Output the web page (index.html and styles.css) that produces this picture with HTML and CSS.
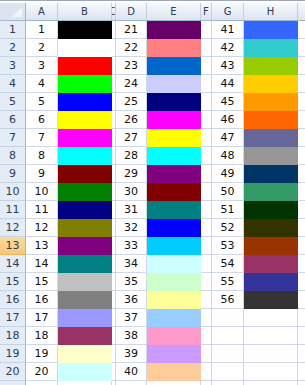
FILE: index.html
```html
<!DOCTYPE html>
<html>
<head>
<meta charset="utf-8">
<link rel="stylesheet" href="styles.css">
</head>
<body>
<div class="sheet">
  <div class="grid">
    <div class="ch corner"><span class="tri"></span></div>
    <div class="ch">A</div><div class="ch">B</div><div class="ch cut">C</div><div class="ch">D</div><div class="ch">E</div><div class="ch">F</div><div class="ch">G</div><div class="ch">H</div><div class="ch"></div>

    <div class="rh">1</div><div class="c">1</div><div class="c fill" style="--c:#000000"></div><div class="c"></div><div class="c">21</div><div class="c fill" style="--c:#660066"></div><div class="c"></div><div class="c">41</div><div class="c fill" style="--c:#3366FF"></div><div class="c"></div>
    <div class="rh">2</div><div class="c">2</div><div class="c fill" style="--c:#FFFFFF"></div><div class="c"></div><div class="c">22</div><div class="c fill" style="--c:#FF8080"></div><div class="c"></div><div class="c">42</div><div class="c fill" style="--c:#33CCCC"></div><div class="c"></div>
    <div class="rh">3</div><div class="c">3</div><div class="c fill" style="--c:#FF0000"></div><div class="c"></div><div class="c">23</div><div class="c fill" style="--c:#0066CC"></div><div class="c"></div><div class="c">43</div><div class="c fill" style="--c:#99CC00"></div><div class="c"></div>
    <div class="rh">4</div><div class="c">4</div><div class="c fill" style="--c:#00FF00"></div><div class="c"></div><div class="c">24</div><div class="c fill" style="--c:#CCCCFF"></div><div class="c"></div><div class="c">44</div><div class="c fill" style="--c:#FFCC00"></div><div class="c"></div>
    <div class="rh">5</div><div class="c">5</div><div class="c fill" style="--c:#0000FF"></div><div class="c"></div><div class="c">25</div><div class="c fill" style="--c:#000080"></div><div class="c"></div><div class="c">45</div><div class="c fill" style="--c:#FF9900"></div><div class="c"></div>
    <div class="rh">6</div><div class="c">6</div><div class="c fill" style="--c:#FFFF00"></div><div class="c"></div><div class="c">26</div><div class="c fill" style="--c:#FF00FF"></div><div class="c"></div><div class="c">46</div><div class="c fill" style="--c:#FF6600"></div><div class="c"></div>
    <div class="rh">7</div><div class="c">7</div><div class="c fill" style="--c:#FF00FF"></div><div class="c"></div><div class="c">27</div><div class="c fill" style="--c:#FFFF00"></div><div class="c"></div><div class="c">47</div><div class="c fill" style="--c:#666699"></div><div class="c"></div>
    <div class="rh">8</div><div class="c">8</div><div class="c fill" style="--c:#00FFFF"></div><div class="c"></div><div class="c">28</div><div class="c fill" style="--c:#00FFFF"></div><div class="c"></div><div class="c">48</div><div class="c fill" style="--c:#969696"></div><div class="c"></div>
    <div class="rh">9</div><div class="c">9</div><div class="c fill" style="--c:#800000"></div><div class="c"></div><div class="c">29</div><div class="c fill" style="--c:#800080"></div><div class="c"></div><div class="c">49</div><div class="c fill" style="--c:#003366"></div><div class="c"></div>
    <div class="rh">10</div><div class="c">10</div><div class="c fill" style="--c:#008000"></div><div class="c"></div><div class="c">30</div><div class="c fill" style="--c:#800000"></div><div class="c"></div><div class="c">50</div><div class="c fill" style="--c:#339966"></div><div class="c"></div>
    <div class="rh">11</div><div class="c">11</div><div class="c fill" style="--c:#000080"></div><div class="c"></div><div class="c">31</div><div class="c fill" style="--c:#008080"></div><div class="c"></div><div class="c">51</div><div class="c fill" style="--c:#003300"></div><div class="c"></div>
    <div class="rh">12</div><div class="c">12</div><div class="c fill" style="--c:#808000"></div><div class="c"></div><div class="c">32</div><div class="c fill" style="--c:#0000FF"></div><div class="c"></div><div class="c">52</div><div class="c fill" style="--c:#333300"></div><div class="c"></div>
    <div class="rh sel">13</div><div class="c">13</div><div class="c fill" style="--c:#800080"></div><div class="c"></div><div class="c">33</div><div class="c fill" style="--c:#00CCFF"></div><div class="c"></div><div class="c">53</div><div class="c fill" style="--c:#993300"></div><div class="c"></div>
    <div class="rh">14</div><div class="c">14</div><div class="c fill" style="--c:#008080"></div><div class="c"></div><div class="c">34</div><div class="c fill" style="--c:#CCFFFF"></div><div class="c"></div><div class="c">54</div><div class="c fill" style="--c:#993366"></div><div class="c"></div>
    <div class="rh">15</div><div class="c">15</div><div class="c fill" style="--c:#C0C0C0"></div><div class="c"></div><div class="c">35</div><div class="c fill" style="--c:#CCFFCC"></div><div class="c"></div><div class="c">55</div><div class="c fill" style="--c:#333399"></div><div class="c"></div>
    <div class="rh">16</div><div class="c">16</div><div class="c fill" style="--c:#808080"></div><div class="c"></div><div class="c">36</div><div class="c fill" style="--c:#FFFF99"></div><div class="c"></div><div class="c">56</div><div class="c fill" style="--c:#333333"></div><div class="c"></div>
    <div class="rh">17</div><div class="c">17</div><div class="c fill" style="--c:#9999FF"></div><div class="c"></div><div class="c">37</div><div class="c fill" style="--c:#99CCFF"></div><div class="c"></div><div class="c"></div><div class="c"></div><div class="c"></div>
    <div class="rh">18</div><div class="c">18</div><div class="c fill" style="--c:#993366"></div><div class="c"></div><div class="c">38</div><div class="c fill" style="--c:#FF99CC"></div><div class="c"></div><div class="c"></div><div class="c"></div><div class="c"></div>
    <div class="rh">19</div><div class="c">19</div><div class="c fill" style="--c:#FFFFCC"></div><div class="c"></div><div class="c">39</div><div class="c fill" style="--c:#CC99FF"></div><div class="c"></div><div class="c"></div><div class="c"></div><div class="c"></div>
    <div class="rh">20</div><div class="c">20</div><div class="c fill" style="--c:#CCFFFF"></div><div class="c"></div><div class="c">40</div><div class="c fill" style="--c:#FFCC99"></div><div class="c"></div><div class="c"></div><div class="c"></div><div class="c"></div>
    <div class="rh"></div><div class="c"></div><div class="c"></div><div class="c"></div><div class="c"></div><div class="c"></div><div class="c"></div><div class="c"></div><div class="c"></div><div class="c"></div>
  </div>
</div>
</body>
</html>
```

FILE: styles.css
```css
html, body {
  margin: 0;
  padding: 0;
  background: #ffffff;
  overflow: hidden;
}

.sheet {
  width: 305px;
  height: 385px;
  overflow: hidden;
  border-top: 1px solid #9ca8b8;
  padding-top: 2px;
  box-sizing: border-box;
  font-family: "DejaVu Sans", "Liberation Sans", sans-serif;
  font-size: 11px;
}

.grid {
  display: grid;
  grid-template-columns: 26px 32px 54px 4px 31px 54px 11px 32px 54px 40px;
  grid-template-rows: 18px;
  grid-auto-rows: 18px;
}

.grid > div {
  box-sizing: border-box;
  overflow: hidden;
  white-space: nowrap;
}

.ch {
  background: linear-gradient(to bottom, #f8fafd 0%, #eaf0f7 45%, #dce4ef 100%);
  border-right: 1px solid #c4d0e0;
  border-bottom: 1px solid #9eb6ce;
  color: #2c3c52;
  font-size: 10px;
  line-height: 17px;
  text-align: center;
}

.ch.cut {
  text-indent: -3px;
}

.corner {
  position: relative;
  background: #dbe5f2;
  border-right: 1px solid #9eb6ce;
}

.tri {
  position: absolute;
  right: 3px;
  bottom: 3px;
  width: 10px;
  height: 10px;
  background: #f2f5fa;
  clip-path: polygon(100% 0, 100% 100%, 0 100%);
}

.rh {
  background: #e4ecf7;
  border-right: 1px solid #9eb6ce;
  border-bottom: 1px solid #c5d3e3;
  color: #2c3c52;
  text-align: center;
  line-height: 18px;
  font-size: 11px;
}

.rh.sel {
  background: linear-gradient(to bottom, #f9dba4 0%, #f6c877 100%);
  border-bottom-color: #f2b55c;
}

.c {
  border-right: 1px solid #d0d7e5;
  border-bottom: 1px solid #d0d7e5;
  color: #111111;
  text-align: center;
  line-height: 18px;
}

.c.fill {
  background: var(--c);
  border-color: var(--c);
}
```
